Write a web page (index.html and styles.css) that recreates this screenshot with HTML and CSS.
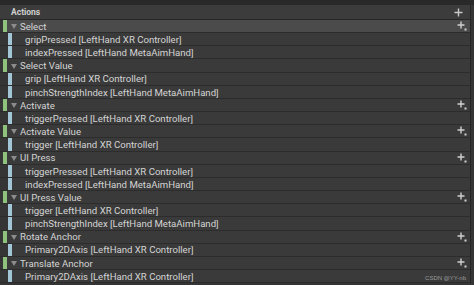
FILE: index.html
```html
<!DOCTYPE html>
<html>
<head>
<meta charset="utf-8">
<link rel="stylesheet" href="styles.css">
</head>
<body>
<div class="panel">
  <div class="topbar"></div>
  <div class="header">
    <span class="title">Actions</span>
    <svg class="plus" width="9" height="9" viewBox="0 0 9 9"><path d="M4.5 0.5v8M0.5 4.5h8" stroke="#c8c8c8" stroke-width="1.4"/></svg>
  </div>
  <div class="list">
    <div class="row action selected"><span class="abar"></span><span class="tri"></span><span class="label">Select</span><span class="add"><svg width="10" height="10" viewBox="0 0 10 10"><path d="M4 0.5v7M0.5 4h7" stroke="#d0d0d0" stroke-width="1.4"/><rect x="7.5" y="7.5" width="2" height="2" fill="#d0d0d0"/></svg></span></div>
    <div class="row binding"><span class="bbar"></span><span class="label">gripPressed [LeftHand XR Controller]</span></div>
    <div class="row binding"><span class="bbar"></span><span class="label">indexPressed [LeftHand MetaAimHand]</span></div>
    <div class="row action"><span class="abar"></span><span class="tri"></span><span class="label">Select Value</span></div>
    <div class="row binding"><span class="bbar"></span><span class="label">grip [LeftHand XR Controller]</span></div>
    <div class="row binding"><span class="bbar"></span><span class="label">pinchStrengthIndex [LeftHand MetaAimHand]</span></div>
    <div class="row action"><span class="abar"></span><span class="tri"></span><span class="label">Activate</span><span class="add"><svg width="10" height="10" viewBox="0 0 10 10"><path d="M4 0.5v7M0.5 4h7" stroke="#d0d0d0" stroke-width="1.4"/><rect x="7.5" y="7.5" width="2" height="2" fill="#d0d0d0"/></svg></span></div>
    <div class="row binding"><span class="bbar"></span><span class="label">triggerPressed [LeftHand XR Controller]</span></div>
    <div class="row action"><span class="abar"></span><span class="tri"></span><span class="label">Activate Value</span><span class="add"><svg width="10" height="10" viewBox="0 0 10 10"><path d="M4 0.5v7M0.5 4h7" stroke="#d0d0d0" stroke-width="1.4"/><rect x="7.5" y="7.5" width="2" height="2" fill="#d0d0d0"/></svg></span></div>
    <div class="row binding"><span class="bbar"></span><span class="label">trigger [LeftHand XR Controller]</span></div>
    <div class="row action"><span class="abar"></span><span class="tri"></span><span class="label">UI Press</span><span class="add"><svg width="10" height="10" viewBox="0 0 10 10"><path d="M4 0.5v7M0.5 4h7" stroke="#d0d0d0" stroke-width="1.4"/><rect x="7.5" y="7.5" width="2" height="2" fill="#d0d0d0"/></svg></span></div>
    <div class="row binding"><span class="bbar"></span><span class="label">triggerPressed [LeftHand XR Controller]</span></div>
    <div class="row binding"><span class="bbar"></span><span class="label">indexPressed [LeftHand MetaAimHand]</span></div>
    <div class="row action"><span class="abar"></span><span class="tri"></span><span class="label">UI Press Value</span><span class="add"><svg width="10" height="10" viewBox="0 0 10 10"><path d="M4 0.5v7M0.5 4h7" stroke="#d0d0d0" stroke-width="1.4"/><rect x="7.5" y="7.5" width="2" height="2" fill="#d0d0d0"/></svg></span></div>
    <div class="row binding"><span class="bbar"></span><span class="label">trigger [LeftHand XR Controller]</span></div>
    <div class="row binding"><span class="bbar"></span><span class="label">pinchStrengthIndex [LeftHand MetaAimHand]</span></div>
    <div class="row action"><span class="abar"></span><span class="tri"></span><span class="label">Rotate Anchor</span><span class="add"><svg width="10" height="10" viewBox="0 0 10 10"><path d="M4 0.5v7M0.5 4h7" stroke="#d0d0d0" stroke-width="1.4"/><rect x="7.5" y="7.5" width="2" height="2" fill="#d0d0d0"/></svg></span></div>
    <div class="row binding"><span class="bbar"></span><span class="label">Primary2DAxis [LeftHand XR Controller]</span></div>
    <div class="row action"><span class="abar"></span><span class="tri"></span><span class="label">Translate Anchor</span><span class="add"><svg width="10" height="10" viewBox="0 0 10 10"><path d="M4 0.5v7M0.5 4h7" stroke="#d0d0d0" stroke-width="1.4"/><rect x="7.5" y="7.5" width="2" height="2" fill="#d0d0d0"/></svg></span></div>
    <div class="row binding"><span class="bbar"></span><span class="label">Primary2DAxis [LeftHand XR Controller]</span></div>
  </div>
  <div class="watermark">CSDN @YY-nb</div>
</div>
</body>
</html>
```
FILE: styles.css
```css
html, body {
  margin: 0;
  padding: 0;
  background: #383838;
}
.panel {
  position: relative;
  width: 474px;
  height: 285px;
  overflow: hidden;
  background: #353535;
  font-family: Roboto, Inter, sans-serif;
  color: #d4d4d4;
  display: flex;
  flex-direction: column;
}
.topbar {
  height: 5px;
  background: #292929;
  flex: none;
}
.header {
  height: 15px;
  box-sizing: border-box;
  flex: none;
  background: #3c3c3c;
  border-bottom: 1px solid #262626;
  display: flex;
  align-items: center;
  padding-left: 11px;
  padding-right: 7px;
  width: 471px;
  border-right: 1px solid #262626;
}
.title {
  font-size: 8.5px;
  font-weight: 700;
  color: #cfcfcf;
  flex: 1;
}
.plus {
  display: block;
}
.list {
  width: 471px;
  box-sizing: border-box;
  border-right: 1px solid #252525;
  display: flex;
  flex-direction: column;
}
.row {
  height: 13.16px;
  box-sizing: border-box;
  display: flex;
  align-items: stretch;
  border-bottom: 1px solid #2c2c2c;
  background: #3a3a3a;
  font-size: 9.6px;
  flex: none;
}
.row.selected {
  background: #4b4b4b;
}
.label {
  display: flex;
  align-items: center;
  flex: 1;
  white-space: nowrap;
  line-height: 1;
  padding-top: 1px;
}
.abar {
  flex: none;
  width: 4px;
  margin-right: 4px;
  background: #8fc27c;
  border-left: 3px solid #353535;
  box-sizing: content-box;
}
.tri {
  width: 0;
  height: 0;
  border-left: 3px solid transparent;
  border-right: 3px solid transparent;
  border-top: 5px solid #8c8c8c;
  align-self: center;
  margin-right: 3px;
  margin-top: 1px;
}
.binding .bbar {
  border-left: 8px solid #353535;
  width: 4px;
  background: #a3c6d6;
  flex: none;
  margin-right: 13px;
}
.add {
  display: flex;
  align-items: center;
  padding-right: 3px;
}
.add svg {
  display: block;
}
.watermark {
  position: absolute;
  right: 8px;
  bottom: 4px;
  font-size: 6px;
  color: #9a9a9a;
  font-family: "Liberation Sans", sans-serif;
}
```
